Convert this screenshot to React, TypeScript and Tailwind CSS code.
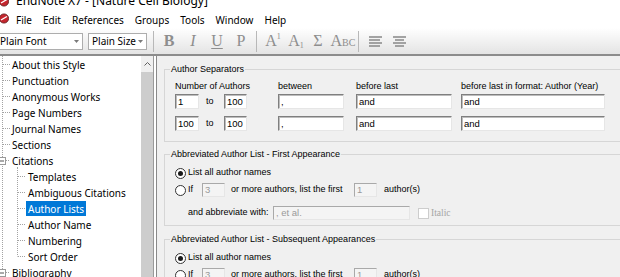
import React from "react";

const tree = [
  { label: "About this Style", level: 1 },
  { label: "Punctuation", level: 1 },
  { label: "Anonymous Works", level: 1 },
  { label: "Page Numbers", level: 1 },
  { label: "Journal Names", level: 1 },
  { label: "Sections", level: 1 },
  { label: "Citations", level: 1, expander: true },
  { label: "Templates", level: 2 },
  { label: "Ambiguous Citations", level: 2 },
  { label: "Author Lists", level: 2, selected: true },
  { label: "Author Name", level: 2 },
  { label: "Numbering", level: 2 },
  { label: "Sort Order", level: 2, last: true },
  { label: "Bibliography", level: 1, expander: true },
];

const dots = { stroke: "#a3a3a3", strokeDasharray: "1 1" };

function AppIcon() {
  return (
    <svg width="9" height="11" viewBox="-3 0 9 11" className="shrink-0">
      <circle cx="1" cy="5.5" r="4.6" fill="#c4262e" stroke="#5a1a1a" strokeWidth="0.8" />
      <path d="M-2 7 L4 3.5" stroke="#fff" strokeWidth="1.4" />
    </svg>
  );
}

function TreeRow({ item }: { item: (typeof tree)[number] }) {
  const lvl2 = item.level === 2;
  return (
    <div className="flex h-4 items-center">
      {lvl2 ? (
        <svg width="26" height="16" className="shrink-0">
          <line x1="2.5" y1="0" x2="2.5" y2="16" {...dots} />
          <line x1="17.5" y1="0" x2="17.5" y2={item.last ? 8.5 : 16} {...dots} />
          <line x1="18" y1="8.5" x2="26" y2="8.5" {...dots} />
        </svg>
      ) : (
        <svg width="10" height="16" className="shrink-0 overflow-visible">
          <line x1="2.5" y1="0" x2="2.5" y2="16" {...dots} />
          {item.expander ? (
            <>
              <line x1="6" y1="8.5" x2="10" y2="8.5" {...dots} />
              <rect x="-1.5" y="5.5" width="7" height="7" fill="#fff" stroke="#9a9a9a" />
              <line x1="0" y1="9" x2="4" y2="9" stroke="#555" />
              {item.label === "Citations" && <line x1="17.5" y1="15" x2="17.5" y2="16" {...dots} />}
            </>
          ) : (
            <line x1="3" y1="8.5" x2="10" y2="8.5" {...dots} />
          )}
        </svg>
      )}
      <span
        className={
          item.selected
            ? "whitespace-nowrap bg-[#0078d7] px-[2px] pt-px leading-[14px] text-white"
            : "whitespace-nowrap px-[2px] pt-px leading-[14px] text-black"
        }
      >
        {item.label}
      </span>
    </div>
  );
}

function Toolbar() {
  const glyph = "flex h-[22px] items-center justify-center font-['Liberation_Serif',serif] text-[16px] text-[#8e8e8e]";
  return (
    <div className="flex h-[28px] shrink-0 items-center border-b-2 border-[#8c8c8c] bg-linear-to-b from-white to-[#e4e4e4]">
      <div className="ml-[-3px] flex h-[17px] w-[86px] items-center justify-between border border-[#adadad] bg-white pl-[2px] pr-[3px]">
        <span className="text-[10px] leading-none">Plain Font</span>
        <svg width="5" height="3"><path d="M0 0 H5 L2.5 3 Z" fill="#7a7a7a" /></svg>
      </div>
      <div className="ml-[5px] flex h-[17px] w-[59px] items-center justify-between border border-[#adadad] bg-white pl-[3px] pr-[3px]">
        <span className="text-[10px] leading-none">Plain Size</span>
        <svg width="5" height="3"><path d="M0 0 H5 L2.5 3 Z" fill="#7a7a7a" /></svg>
      </div>
      <div className="ml-[6px] h-[21px] w-px bg-[#b8b8b8]" />
      <div className={`ml-[3px] w-[24px] font-bold ${glyph}`}>B</div>
      <div className={`w-[24px] italic ${glyph}`}>I</div>
      <div className={`w-[24px] ${glyph}`}>
        <span className="underline decoration-1 underline-offset-2">U</span>
      </div>
      <div className={`w-[24px] ${glyph}`}>P</div>
      <div className="ml-[3px] h-[21px] w-px bg-[#b8b8b8]" />
      <div className={`ml-[4px] w-[24px] ${glyph}`}>
        A<span className="-mt-[8px] text-[8px]">1</span>
      </div>
      <div className={`w-[22px] ${glyph}`}>
        A<span className="mt-[9px] text-[8px]">1</span>
      </div>
      <div className={`w-[22px] ${glyph}`}>Σ</div>
      <div className={`ml-[1px] w-[26px] ${glyph}`}>
        A<span className="mt-[3px] text-[10px]">BC</span>
      </div>
      <div className="ml-[2px] h-[21px] w-px bg-[#b8b8b8]" />
      <div className="ml-[4px] flex h-[22px] w-[24px] items-center justify-center">
        <svg width="13" height="11">
          {[1, 4, 7, 10].map((y) => (
            <line key={y} x1="0" y1={y} x2={y === 4 || y === 10 ? 11 : 13} y2={y} stroke="#8e8e8e" strokeWidth="1.6" />
          ))}
        </svg>
      </div>
      <div className="flex h-[22px] w-[24px] items-center justify-center">
        <svg width="13" height="11">
          {[1, 4, 7, 10].map((y) => (
            <line
              key={y}
              x1={y === 4 || y === 10 ? 2 : 0}
              y1={y}
              x2={y === 4 || y === 10 ? 11 : 13}
              y2={y}
              stroke="#8e8e8e"
              strokeWidth="1.6"
            />
          ))}
        </svg>
      </div>
    </div>
  );
}

const box =
  "h-[15px] border border-t-[#7f7f7f] border-l-[#7f7f7f] border-r-[#e6e6e6] border-b-[#e6e6e6] bg-white pl-[2px] text-[9.5px] leading-[13px] shadow-[inset_1px_1px_0_#bdbdbd]";
const off =
  "h-[14px] border border-t-[#a9a9a9] border-l-[#a9a9a9] border-r-[#e6e6e6] border-b-[#e6e6e6] bg-[#f4f4f4] pl-[2px] text-[9.5px] leading-[12px] text-[#9a9a9a]";

function Group({ title, className, children }: { title: string; className: string; children: React.ReactNode }) {
  return (
    <fieldset className={`ml-[7px] w-[470px] border border-[#d6d6d6] px-[5px] ${className}`}>
      <legend className="px-[1px] leading-[12px]">{title}</legend>
      {children}
    </fieldset>
  );
}

function Radio({ on }: { on?: boolean }) {
  return (
    <span className="flex h-[11px] w-[11px] shrink-0 items-center justify-center rounded-full border border-[#333] bg-white">
      {on && <span className="h-[5px] w-[5px] rounded-full bg-[#1a1a1a]" />}
    </span>
  );
}

function AbbrevRows() {
  return (
    <>
      <div className="ml-[5px] flex h-[14px] items-center">
        <Radio on />
        <span className="ml-[2px]">List all author names</span>
      </div>
      <div className="ml-[5px] mt-[3px] flex h-[14px] items-center">
        <Radio />
        <span className="ml-[2px] w-[14px]">If</span>
        <div className={`w-[23px] ${off}`}>3</div>
        <span className="ml-[6px] w-[123px] whitespace-nowrap">or more authors, list the first</span>
        <div className={`w-[23px] ${off}`}>1</div>
        <span className="ml-[7px]">author(s)</span>
      </div>
    </>
  );
}

function StylePanel() {
  return (
    <div className="flex-1 overflow-hidden bg-[#f0f0f0] font-['Liberation_Sans',Arial,sans-serif] text-[9px] text-black">
      <Group title="Author Separators" className="mt-[7px] pb-[10px]">
        <div className="ml-[5px] mt-[5px] flex">
          <div className="flex w-[72px] flex-col">
            <span className="whitespace-nowrap leading-[12px]">Number of Authors</span>
            {["1", "100"].map((v, i) => (
              <div key={i} className={i ? "mt-[7px] flex items-center" : "mt-[2px] flex items-center"}>
                <div className={`w-[24px] ${box}`}>{v}</div>
                <span className="ml-[7px] w-[18px]">to</span>
                <div className={`w-[23px] ${box}`}>100</div>
              </div>
            ))}
          </div>
          <div className="ml-[31px] flex w-[66px] flex-col">
            <span className="leading-[12px]">between</span>
            <div className={`mt-[2px] ${box}`}>,</div>
            <div className={`mt-[7px] ${box}`}>,</div>
          </div>
          <div className="ml-[12px] flex w-[96px] flex-col">
            <span className="leading-[12px]">before last</span>
            <div className={`mt-[2px] ${box}`}>and</div>
            <div className={`mt-[7px] ${box}`}>and</div>
          </div>
          <div className="ml-[9px] flex w-[144px] flex-col">
            <span className="whitespace-nowrap leading-[12px]">before last in format: Author (Year)</span>
            <div className={`mt-[2px] ${box}`}>and</div>
            <div className={`mt-[7px] ${box}`}>and</div>
          </div>
        </div>
      </Group>

      <Group title="Abbreviated Author List - First Appearance" className="mt-[6px] pb-[5px] pt-[6px]">
        <AbbrevRows />
        <div className="ml-[18px] mt-[9px] flex h-[14px] items-center">
          <span className="w-[85px] whitespace-nowrap">and abbreviate with:</span>
          <div className={`w-[137px] ${off}`}>, et al.</div>
          <span className="ml-[8px] h-[11px] w-[11px] border border-[#cdcdcd] bg-white" />
          <span className="ml-[2px] font-['Liberation_Serif',serif] text-[9.5px] text-[#a5a5a5]">Italic</span>
        </div>
      </Group>

      <Group title="Abbreviated Author List - Subsequent Appearances" className="mt-[7px] pt-[6px]">
        <AbbrevRows />
      </Group>
    </div>
  );
}

export default function App() {
  return (
    <div className="flex h-[277px] w-[620px] flex-col overflow-hidden bg-white font-['Noto_Sans',sans-serif] text-black">
      <div className="flex h-[8px] shrink-0 items-start overflow-hidden">
        <div className="-mt-[6px] flex items-center">
          <AppIcon />
          <span className="ml-[7px] text-[12px] leading-[14px]">EndNote X7 - [Nature Cell Biology]</span>
        </div>
      </div>

      <div className="flex h-[20px] shrink-0 items-center text-[10px]">
        <AppIcon />
        <div className="ml-[7px] flex translate-y-[2px] gap-[11px]">
          {["File", "Edit", "References", "Groups", "Tools", "Window", "Help"].map((m) => (
            <span key={m}>{m}</span>
          ))}
        </div>
      </div>

      <Toolbar />

      <div className="flex min-h-0 flex-1">
        <div className="w-[141px] shrink-0 overflow-hidden text-[10px]">
          {tree.map((t) => (
            <TreeRow key={t.label} item={t} />
          ))}
        </div>
        <div className="flex w-[12px] shrink-0 flex-col bg-[#f0f0f0]">
          <div className="flex h-[16px] items-center justify-center">
            <svg width="7" height="4">
              <path d="M0.5 3.5 L3.5 0.5 L6.5 3.5" fill="none" stroke="#606060" />
            </svg>
          </div>
          <div className="flex-1 bg-[#cdcdcd]" />
        </div>
        <div className="w-[3px] shrink-0 border-l border-[#9a9a9a] bg-white" />
        <div className="w-px shrink-0 bg-[#8a8a8a]" />
        <StylePanel />
      </div>
    </div>
  );
}
